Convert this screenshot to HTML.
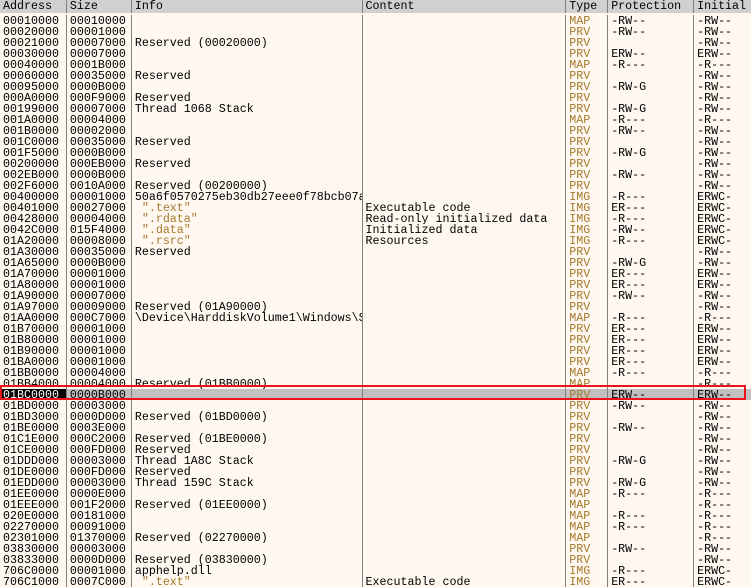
<!DOCTYPE html>
<html><head><style>
body{margin:0;width:751px;height:580px;overflow:hidden;background:#fff8f0;font-family:"Liberation Mono",monospace;font-size:11.67px;}
.r{display:flex;height:11px;line-height:12px;white-space:pre;}
.r>div{box-sizing:border-box;border-right:1px solid #808080;overflow:hidden;padding-left:3px;height:11px;}
.h{height:15px;line-height:13px;background:#d0d0d0;}
.h>div{height:13px;padding-left:3px;}
.h{border-bottom:2px solid #fff8f0;box-sizing:border-box}
.a{width:67px}.s{width:65px}.i{width:231px}.c{width:204px}.t{width:42px;color:#a57a2c}.p{width:86px}.n{width:57px;border-right:none!important}
.h .t{color:#000}
.q{color:#a57a2c}
.sel{background:#c0c0c0}
.sel .a{background:#000;color:#fff}
#box{position:absolute;left:0;top:385px;width:742px;height:11px;border:2px solid #e8141c;}
</style></head><body>
<div class="r h"><div class="a">Address</div><div class="s">Size</div><div class="i">Info</div><div class="c">Content</div><div class="t">Type</div><div class="p">Protection</div><div class="n">Initial</div></div>
<div class="r"><div class="a">00010000</div><div class="s">00010000</div><div class="i"></div><div class="c"></div><div class="t">MAP</div><div class="p">-RW--</div><div class="n">-RW--</div></div>
<div class="r"><div class="a">00020000</div><div class="s">00001000</div><div class="i"></div><div class="c"></div><div class="t">PRV</div><div class="p">-RW--</div><div class="n">-RW--</div></div>
<div class="r"><div class="a">00021000</div><div class="s">00007000</div><div class="i">Reserved (00020000)</div><div class="c"></div><div class="t">PRV</div><div class="p"></div><div class="n">-RW--</div></div>
<div class="r"><div class="a">00030000</div><div class="s">00007000</div><div class="i"></div><div class="c"></div><div class="t">PRV</div><div class="p">ERW--</div><div class="n">ERW--</div></div>
<div class="r"><div class="a">00040000</div><div class="s">0001B000</div><div class="i"></div><div class="c"></div><div class="t">MAP</div><div class="p">-R---</div><div class="n">-R---</div></div>
<div class="r"><div class="a">00060000</div><div class="s">00035000</div><div class="i">Reserved</div><div class="c"></div><div class="t">PRV</div><div class="p"></div><div class="n">-RW--</div></div>
<div class="r"><div class="a">00095000</div><div class="s">0000B000</div><div class="i"></div><div class="c"></div><div class="t">PRV</div><div class="p">-RW-G</div><div class="n">-RW--</div></div>
<div class="r"><div class="a">000A0000</div><div class="s">000F9000</div><div class="i">Reserved</div><div class="c"></div><div class="t">PRV</div><div class="p"></div><div class="n">-RW--</div></div>
<div class="r"><div class="a">00199000</div><div class="s">00007000</div><div class="i">Thread 1068 Stack</div><div class="c"></div><div class="t">PRV</div><div class="p">-RW-G</div><div class="n">-RW--</div></div>
<div class="r"><div class="a">001A0000</div><div class="s">00004000</div><div class="i"></div><div class="c"></div><div class="t">MAP</div><div class="p">-R---</div><div class="n">-R---</div></div>
<div class="r"><div class="a">001B0000</div><div class="s">00002000</div><div class="i"></div><div class="c"></div><div class="t">PRV</div><div class="p">-RW--</div><div class="n">-RW--</div></div>
<div class="r"><div class="a">001C0000</div><div class="s">00035000</div><div class="i">Reserved</div><div class="c"></div><div class="t">PRV</div><div class="p"></div><div class="n">-RW--</div></div>
<div class="r"><div class="a">001F5000</div><div class="s">0000B000</div><div class="i"></div><div class="c"></div><div class="t">PRV</div><div class="p">-RW-G</div><div class="n">-RW--</div></div>
<div class="r"><div class="a">00200000</div><div class="s">000EB000</div><div class="i">Reserved</div><div class="c"></div><div class="t">PRV</div><div class="p"></div><div class="n">-RW--</div></div>
<div class="r"><div class="a">002EB000</div><div class="s">0000B000</div><div class="i"></div><div class="c"></div><div class="t">PRV</div><div class="p">-RW--</div><div class="n">-RW--</div></div>
<div class="r"><div class="a">002F6000</div><div class="s">0010A000</div><div class="i">Reserved (00200000)</div><div class="c"></div><div class="t">PRV</div><div class="p"></div><div class="n">-RW--</div></div>
<div class="r"><div class="a">00400000</div><div class="s">00001000</div><div class="i">50a6f0570275eb30db27eee0f78bcb07a.exe</div><div class="c"></div><div class="t">IMG</div><div class="p">-R---</div><div class="n">ERWC-</div></div>
<div class="r"><div class="a">00401000</div><div class="s">00027000</div><div class="i"> <span class="q">".text"</span></div><div class="c">Executable code</div><div class="t">IMG</div><div class="p">ER---</div><div class="n">ERWC-</div></div>
<div class="r"><div class="a">00428000</div><div class="s">00004000</div><div class="i"> <span class="q">".rdata"</span></div><div class="c">Read-only initialized data</div><div class="t">IMG</div><div class="p">-R---</div><div class="n">ERWC-</div></div>
<div class="r"><div class="a">0042C000</div><div class="s">015F4000</div><div class="i"> <span class="q">".data"</span></div><div class="c">Initialized data</div><div class="t">IMG</div><div class="p">-RW--</div><div class="n">ERWC-</div></div>
<div class="r"><div class="a">01A20000</div><div class="s">00008000</div><div class="i"> <span class="q">".rsrc"</span></div><div class="c">Resources</div><div class="t">IMG</div><div class="p">-R---</div><div class="n">ERWC-</div></div>
<div class="r"><div class="a">01A30000</div><div class="s">00035000</div><div class="i">Reserved</div><div class="c"></div><div class="t">PRV</div><div class="p"></div><div class="n">-RW--</div></div>
<div class="r"><div class="a">01A65000</div><div class="s">0000B000</div><div class="i"></div><div class="c"></div><div class="t">PRV</div><div class="p">-RW-G</div><div class="n">-RW--</div></div>
<div class="r"><div class="a">01A70000</div><div class="s">00001000</div><div class="i"></div><div class="c"></div><div class="t">PRV</div><div class="p">ER---</div><div class="n">ERW--</div></div>
<div class="r"><div class="a">01A80000</div><div class="s">00001000</div><div class="i"></div><div class="c"></div><div class="t">PRV</div><div class="p">ER---</div><div class="n">ERW--</div></div>
<div class="r"><div class="a">01A90000</div><div class="s">00007000</div><div class="i"></div><div class="c"></div><div class="t">PRV</div><div class="p">-RW--</div><div class="n">-RW--</div></div>
<div class="r"><div class="a">01A97000</div><div class="s">00009000</div><div class="i">Reserved (01A90000)</div><div class="c"></div><div class="t">PRV</div><div class="p"></div><div class="n">-RW--</div></div>
<div class="r"><div class="a">01AA0000</div><div class="s">000C7000</div><div class="i">\Device\HarddiskVolume1\Windows\System32</div><div class="c"></div><div class="t">MAP</div><div class="p">-R---</div><div class="n">-R---</div></div>
<div class="r"><div class="a">01B70000</div><div class="s">00001000</div><div class="i"></div><div class="c"></div><div class="t">PRV</div><div class="p">ER---</div><div class="n">ERW--</div></div>
<div class="r"><div class="a">01B80000</div><div class="s">00001000</div><div class="i"></div><div class="c"></div><div class="t">PRV</div><div class="p">ER---</div><div class="n">ERW--</div></div>
<div class="r"><div class="a">01B90000</div><div class="s">00001000</div><div class="i"></div><div class="c"></div><div class="t">PRV</div><div class="p">ER---</div><div class="n">ERW--</div></div>
<div class="r"><div class="a">01BA0000</div><div class="s">00001000</div><div class="i"></div><div class="c"></div><div class="t">PRV</div><div class="p">ER---</div><div class="n">ERW--</div></div>
<div class="r"><div class="a">01BB0000</div><div class="s">00004000</div><div class="i"></div><div class="c"></div><div class="t">MAP</div><div class="p">-R---</div><div class="n">-R---</div></div>
<div class="r"><div class="a">01BB4000</div><div class="s">00004000</div><div class="i">Reserved (01BB0000)</div><div class="c"></div><div class="t">MAP</div><div class="p"></div><div class="n">-R---</div></div>
<div class="r sel"><div class="a">01BC0000</div><div class="s">0000B000</div><div class="i"></div><div class="c"></div><div class="t">PRV</div><div class="p">ERW--</div><div class="n">ERW--</div></div>
<div class="r"><div class="a">01BD0000</div><div class="s">00003000</div><div class="i"></div><div class="c"></div><div class="t">PRV</div><div class="p">-RW--</div><div class="n">-RW--</div></div>
<div class="r"><div class="a">01BD3000</div><div class="s">0000D000</div><div class="i">Reserved (01BD0000)</div><div class="c"></div><div class="t">PRV</div><div class="p"></div><div class="n">-RW--</div></div>
<div class="r"><div class="a">01BE0000</div><div class="s">0003E000</div><div class="i"></div><div class="c"></div><div class="t">PRV</div><div class="p">-RW--</div><div class="n">-RW--</div></div>
<div class="r"><div class="a">01C1E000</div><div class="s">000C2000</div><div class="i">Reserved (01BE0000)</div><div class="c"></div><div class="t">PRV</div><div class="p"></div><div class="n">-RW--</div></div>
<div class="r"><div class="a">01CE0000</div><div class="s">000FD000</div><div class="i">Reserved</div><div class="c"></div><div class="t">PRV</div><div class="p"></div><div class="n">-RW--</div></div>
<div class="r"><div class="a">01DDD000</div><div class="s">00003000</div><div class="i">Thread 1A8C Stack</div><div class="c"></div><div class="t">PRV</div><div class="p">-RW-G</div><div class="n">-RW--</div></div>
<div class="r"><div class="a">01DE0000</div><div class="s">000FD000</div><div class="i">Reserved</div><div class="c"></div><div class="t">PRV</div><div class="p"></div><div class="n">-RW--</div></div>
<div class="r"><div class="a">01EDD000</div><div class="s">00003000</div><div class="i">Thread 159C Stack</div><div class="c"></div><div class="t">PRV</div><div class="p">-RW-G</div><div class="n">-RW--</div></div>
<div class="r"><div class="a">01EE0000</div><div class="s">0000E000</div><div class="i"></div><div class="c"></div><div class="t">MAP</div><div class="p">-R---</div><div class="n">-R---</div></div>
<div class="r"><div class="a">01EEE000</div><div class="s">001F2000</div><div class="i">Reserved (01EE0000)</div><div class="c"></div><div class="t">MAP</div><div class="p"></div><div class="n">-R---</div></div>
<div class="r"><div class="a">020E0000</div><div class="s">00181000</div><div class="i"></div><div class="c"></div><div class="t">MAP</div><div class="p">-R---</div><div class="n">-R---</div></div>
<div class="r"><div class="a">02270000</div><div class="s">00091000</div><div class="i"></div><div class="c"></div><div class="t">MAP</div><div class="p">-R---</div><div class="n">-R---</div></div>
<div class="r"><div class="a">02301000</div><div class="s">01370000</div><div class="i">Reserved (02270000)</div><div class="c"></div><div class="t">MAP</div><div class="p"></div><div class="n">-R---</div></div>
<div class="r"><div class="a">03830000</div><div class="s">00003000</div><div class="i"></div><div class="c"></div><div class="t">PRV</div><div class="p">-RW--</div><div class="n">-RW--</div></div>
<div class="r"><div class="a">03833000</div><div class="s">0000D000</div><div class="i">Reserved (03830000)</div><div class="c"></div><div class="t">PRV</div><div class="p"></div><div class="n">-RW--</div></div>
<div class="r"><div class="a">706C0000</div><div class="s">00001000</div><div class="i">apphelp.dll</div><div class="c"></div><div class="t">IMG</div><div class="p">-R---</div><div class="n">ERWC-</div></div>
<div class="r"><div class="a">706C1000</div><div class="s">0007C000</div><div class="i"> <span class="q">".text"</span></div><div class="c">Executable code</div><div class="t">IMG</div><div class="p">ER---</div><div class="n">ERWC-</div></div>
<div id="box"></div>
</body></html>
